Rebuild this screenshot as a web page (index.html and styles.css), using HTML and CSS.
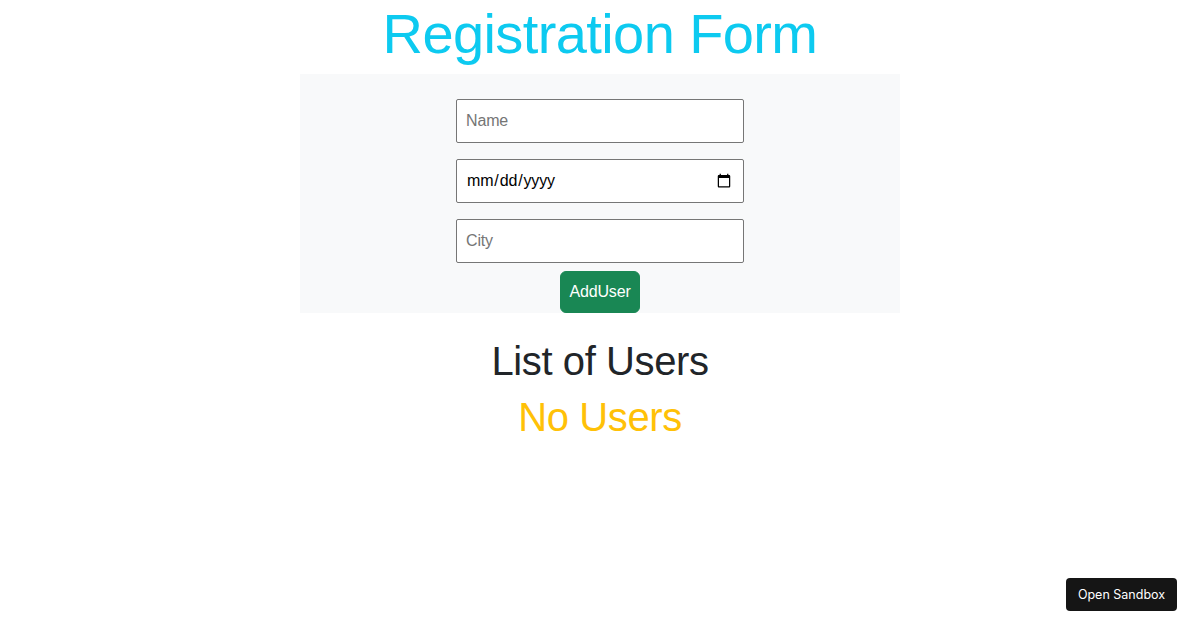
FILE: index.html
```html
<!DOCTYPE html>
<html>
<head>
<meta charset="utf-8">
<link rel="stylesheet" href="styles.css">
</head>
<body>
<div class="app">
  <h1 class="title">Registration Form</h1>
  <form class="form-box">
    <input class="field" type="text" placeholder="Name">
    <input class="field" type="date">
    <input class="field" type="text" placeholder="City">
    <button class="btn-add" type="button">AddUser</button>
  </form>
  <h2 class="list-title">List of Users</h2>
  <h3 class="empty">No Users</h3>
</div>
<a class="sandbox-btn">Open Sandbox</a>
</body>
</html>
```
FILE: styles.css
```css
html, body {
  margin: 0;
  padding: 0;
  background: #fff;
}
body {
  font-family: "Liberation Sans", Arial, sans-serif;
  color: #212529;
}
.app {
  display: flex;
  flex-direction: column;
  align-items: center;
}
.title {
  margin: 0;
  font-size: 56px;
  font-weight: normal;
  line-height: 1.2;
  letter-spacing: -0.6px;
  color: #0dcaf0;
  height: 74px;
}
.form-box {
  width: 600px;
  background: #f8f9fa;
  display: flex;
  flex-direction: column;
  align-items: center;
  padding-top: 25px;
  box-sizing: border-box;
  margin: 0;
}
.field {
  width: 288px;
  height: 44px;
  box-sizing: border-box;
  border: 1px solid #767676;
  border-radius: 2px;
  padding: 0 9px;
  font-family: "Liberation Sans", Arial, sans-serif;
  font-size: 16px;
  letter-spacing: -0.15px;
  color: #000;
  background: #fff;
  margin: 0 0 16px 0;
}
.field:last-of-type {
  margin-bottom: 8px;
}
.field::placeholder {
  color: #757575;
}
.btn-add {
  background: #198754;
  color: #fff;
  border: 1px solid #198754;
  border-radius: 6px;
  font-family: "Liberation Sans", Arial, sans-serif;
  font-size: 16px;
  line-height: 24px;
  letter-spacing: -0.15px;
  padding: 8px 8px;
  width: 80px;
  height: 42px;
  box-sizing: border-box;
  cursor: pointer;
}
.list-title {
  margin: 24px 0 0 0;
  font-size: 40px;
  font-weight: normal;
  line-height: 1.2;
  letter-spacing: -0.4px;
  color: #212529;
}
.empty {
  margin: 8px 0 0 0;
  font-size: 40px;
  font-weight: normal;
  line-height: 1.2;
  letter-spacing: -0.4px;
  color: #ffc107;
}
.sandbox-btn {
  position: fixed;
  right: 23px;
  bottom: 19px;
  width: 111px;
  height: 33px;
  box-sizing: border-box;
  background: #151515;
  color: #fff;
  border-radius: 4px;
  font-family: Inter, "Liberation Sans", sans-serif;
  font-size: 12.5px;
  display: flex;
  align-items: center;
  justify-content: center;
}
```
